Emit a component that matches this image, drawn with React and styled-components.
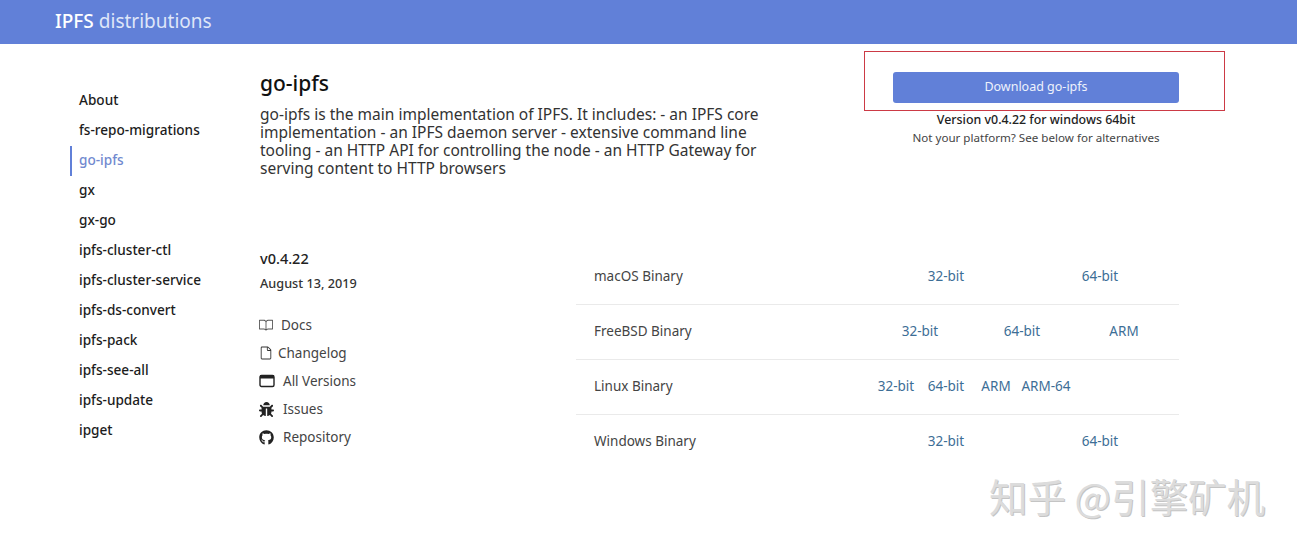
import React from 'react';
import styled, { createGlobalStyle } from 'styled-components';
import { GoBook, GoFile } from 'react-icons/go';
import { FaBug, FaGithub } from 'react-icons/fa';

const GlobalStyle = createGlobalStyle`
  html, body {
    margin: 0;
    padding: 0;
    background: #fff;
  }
  body {
    font-family: "Noto Sans", "Open Sans", sans-serif;
    color: #333;
  }
`;

const Page = styled.div`
  position: relative;
  width: 1297px;
  height: 549px;
  overflow: hidden;
`;

const Header = styled.header`
  height: 44px;
  box-sizing: border-box;
  padding: 0 0 2px 55px;
  background: #6180d8;
  display: flex;
  align-items: center;
  font-size: 19px;
  color: #dfe6f8;
`;

const Brand = styled.span`
  color: #fff;
  font-weight: 500;
  margin-right: 5px;
`;

const Body = styled.div`
  display: flex;
  padding-left: 70px;
`;

const Sidebar = styled.nav`
  width: 190px;
  padding-top: 42px;
  display: flex;
  flex-direction: column;
`;

const NavItem = styled.a`
  height: 30px;
  line-height: 27px;
  padding-left: ${p => (p.$active ? '7px' : '9px')};
  border-left: ${p => (p.$active ? '2px solid #6180d8' : 'none')};
  font-size: 13.6px;
  font-weight: 500;
  color: ${p => (p.$active ? '#7189cf' : '#1c1c1c')};
`;

const Main = styled.main`
  width: 919px;
  padding-top: 26px;
`;

const Intro = styled.section`
  display: flex;
  justify-content: space-between;
  height: 178px;
`;

const IntroText = styled.div`
  width: 510px;
`;

const Title = styled.h1`
  margin: 0 0 8px;
  font-size: 21px;
  line-height: 27px;
  font-weight: 500;
  color: #111;
`;

const Description = styled.p`
  margin: 0;
  font-size: 15.5px;
  line-height: 18px;
  color: #333;
`;

const DownloadBox = styled.div`
  width: 286px;
  margin-top: 2px;
  text-align: center;
`;

const ButtonWrap = styled.div`
  position: relative;
  margin-bottom: 8px;
`;

const DownloadButton = styled.button`
  display: block;
  width: 100%;
  height: 31px;
  padding: 0 0 2px;
  border: none;
  border-radius: 3px;
  background: #6180d8;
  color: #eef2fc;
  font-family: inherit;
  font-size: 12.5px;
`;

const RedFrame = styled.div`
  position: absolute;
  left: -29px;
  right: -46px;
  top: -21px;
  bottom: -8px;
  border: 1px solid #cc3a45;
`;

const VersionLine = styled.div`
  font-size: 12.4px;
  line-height: 18px;
  font-weight: 500;
  color: #222;
`;

const PlatformLine = styled.div`
  margin-top: -1px;
  font-size: 11.6px;
  line-height: 20px;
  color: #444;
`;

const Releases = styled.section`
  display: flex;
`;

const ReleaseInfo = styled.div`
  width: 316px;
`;

const ReleaseVersion = styled.div`
  font-size: 14.5px;
  line-height: 20px;
  font-weight: 500;
  color: #222;
`;

const ReleaseDate = styled.div`
  margin-top: 5px;
  font-size: 12.7px;
  line-height: 20px;
  font-weight: 500;
  color: #333;
`;

const ResourceList = styled.div`
  margin-top: 18px;
  display: flex;
  flex-direction: column;
`;

const Resource = styled.a`
  height: 28px;
  display: flex;
  align-items: center;
  gap: ${p => p.$gap}px;
  font-size: 13.5px;
  color: #444;
`;

const IconBox = styled.span`
  display: flex;
  color: ${p => p.$color || '#222'};
  margin-left: -1px;
`;

const Table = styled.div`
  width: 603px;
  margin-top: 2px;
`;

const Row = styled.div`
  height: 55px;
  display: flex;
  align-items: center;
  padding: 0 0 2px 18px;
  border-bottom: 1px solid ${p => (p.$last ? 'transparent' : '#eaeaea')};
  box-sizing: border-box;
`;

const RowLabel = styled.div`
  width: 275px;
  margin-right: ${p => p.$offset || 0}px;
  font-size: 13.5px;
  color: #444;
`;

const Links = styled.div`
  display: grid;
  grid-template-columns: repeat(${p => p.$count}, ${p => p.$col}px);
`;

const BinLink = styled.a`
  text-align: center;
  font-size: 13.5px;
  color: #3d6e96;
`;

const Watermark = styled.div`
  position: absolute;
  left: 989px;
  top: 472px;
  font-family: "Noto Sans CJK SC", sans-serif;
  font-size: 38.5px;
  line-height: 46px;
  white-space: pre;
  color: #dcdcdc;
  text-shadow: 1px 1px 0 #c4c4c4;
`;

const BrowserIcon = () => (
  <svg width="16" height="14" viewBox="0 0 16 14" fill="none">
    <rect x="1" y="1.5" width="14" height="11" rx="1.5" stroke="#222" strokeWidth="1.4" />
    <rect x="1" y="1" width="14" height="3.5" fill="#222" />
  </svg>
);

const navItems = [
  'About', 'fs-repo-migrations', 'go-ipfs', 'gx', 'gx-go', 'ipfs-cluster-ctl',
  'ipfs-cluster-service', 'ipfs-ds-convert', 'ipfs-pack', 'ipfs-see-all', 'ipfs-update', 'ipget',
];

const resources = [
  { name: 'Docs', gap: 8, icon: <GoBook size={14} />, color: '#555' },
  { name: 'Changelog', gap: 5, icon: <GoFile size={14} />, color: '#333' },
  { name: 'All Versions', gap: 8, icon: <BrowserIcon /> },
  { name: 'Issues', gap: 9, icon: <FaBug size={15} /> },
  { name: 'Repository', gap: 9, icon: <FaGithub size={15} /> },
];

const rows = [
  { label: 'macOS Binary', col: 154, links: ['32-bit', '64-bit'] },
  { label: 'FreeBSD Binary', col: 102, links: ['32-bit', '64-bit', 'ARM'] },
  { label: 'Linux Binary', col: 50, offset: 2, links: ['32-bit', '64-bit', 'ARM', 'ARM-64'] },
  { label: 'Windows Binary', col: 154, links: ['32-bit', '64-bit'], last: true },
];

export default function App() {
  return (
    <Page>
      <GlobalStyle />
      <Header>
        <Brand>IPFS</Brand> distributions
      </Header>
      <Body>
        <Sidebar>
          {navItems.map(item => (
            <NavItem key={item} $active={item === 'go-ipfs'}>{item}</NavItem>
          ))}
        </Sidebar>
        <Main>
          <Intro>
            <IntroText>
              <Title>go-ipfs</Title>
              <Description>
                go-ipfs is the main implementation of IPFS. It includes: - an IPFS core
                implementation - an IPFS daemon server - extensive command line
                tooling - an HTTP API for controlling the node - an HTTP Gateway for
                serving content to HTTP browsers
              </Description>
            </IntroText>
            <DownloadBox>
              <ButtonWrap>
                <DownloadButton>Download go-ipfs</DownloadButton>
                <RedFrame />
              </ButtonWrap>
              <VersionLine>Version v0.4.22 for windows 64bit</VersionLine>
              <PlatformLine>Not your platform? See below for alternatives</PlatformLine>
            </DownloadBox>
          </Intro>
          <Releases>
            <ReleaseInfo>
              <ReleaseVersion>v0.4.22</ReleaseVersion>
              <ReleaseDate>August 13, 2019</ReleaseDate>
              <ResourceList>
                {resources.map(r => (
                  <Resource key={r.name} $gap={r.gap}>
                    <IconBox $color={r.color}>{r.icon}</IconBox>
                    {r.name}
                  </Resource>
                ))}
              </ResourceList>
            </ReleaseInfo>
            <Table>
              {rows.map(row => (
                <Row key={row.label} $last={row.last}>
                  <RowLabel $offset={row.offset}>{row.label}</RowLabel>
                  <Links $count={row.links.length} $col={row.col}>
                    {row.links.map(l => <BinLink key={l}>{l}</BinLink>)}
                  </Links>
                </Row>
              ))}
            </Table>
          </Releases>
        </Main>
      </Body>
      <Watermark>知乎 @引擎矿机</Watermark>
    </Page>
  );
}
